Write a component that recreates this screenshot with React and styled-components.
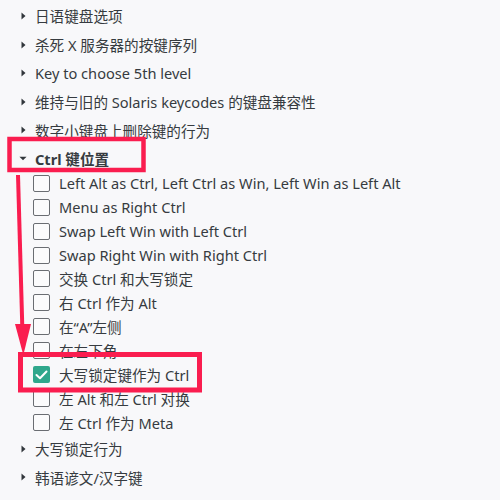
import React from "react";
import styled, { createGlobalStyle } from "styled-components";

const Global = createGlobalStyle`
  html, body { margin: 0; padding: 0; background: #f8f8fa; }
  body {
    width: 500px; height: 500px; overflow: hidden;
    font-family: "Noto Sans", "Noto Sans CJK SC", sans-serif;
    color: #363b40;
  }
`;

const Page = styled.div`
  position: relative;
  width: 500px;
  height: 500px;
  padding-top: 1.7px;
  box-sizing: border-box;
`;

const Tree = styled.ul`
  list-style: none;
  margin: 0;
  padding: 0;
`;

const Header = styled.li`
  height: 28.6px;
  display: flex;
  align-items: center;
  padding-left: 19px;
  font-size: 14.6px;
  font-weight: ${(p) => (p.$bold ? 700 : 400)};
`;

const Twisty = styled.span`
  width: 8px;
  height: 8px;
  margin-right: 8px;
  display: flex;
  align-items: center;
  justify-content: center;
  flex: none;
`;

const Children = styled.ul`
  list-style: none;
  margin: -1.8px 0 0 0;
  padding: 0;
`;

const Option = styled.li`
  height: 23.9px;
  display: flex;
  align-items: center;
  padding-left: 33px;
  font-size: 14.6px;
`;

const Box = styled.span`
  width: 17px;
  height: 17px;
  box-sizing: border-box;
  border-radius: 2px;
  border: ${(p) => (p.$checked ? "none" : "1px solid #6a6d72")};
  background: ${(p) => (p.$checked ? "#2fa78c" : "#fbfbfc")};
  margin-right: 9px;
  flex: none;
  display: flex;
  align-items: center;
  justify-content: center;
`;

const Overlay = styled.svg`
  position: absolute;
  left: 0;
  top: 0;
  pointer-events: none;
`;

const Collapsed = () => (
  <svg width="5" height="8" viewBox="0 0 5 8">
    <path d="M0.5 0.5 L4.5 4 L0.5 7.5 Z" fill="#31363b" />
  </svg>
);

const Expanded = () => (
  <svg width="9" height="5" viewBox="0 0 9 5">
    <path d="M0.5 0.5 L8.5 0.5 L4.5 4.5 Z" fill="#31363b" />
  </svg>
);

const Check = () => (
  <svg width="13" height="10" viewBox="0 0 13 10">
    <path d="M1.5 5 L5 8.3 L11.5 1.5" fill="none" stroke="#fff" strokeWidth="2" strokeLinecap="round" strokeLinejoin="round" />
  </svg>
);

const topItems = [
  "日语键盘选项",
  "杀死 X 服务器的按键序列",
  "Key to choose 5th level",
  "维持与旧的 Solaris keycodes 的键盘兼容性",
  "数字小键盘上删除键的行为",
];

const options = [
  "Left Alt as Ctrl, Left Ctrl as Win, Left Win as Left Alt",
  "Menu as Right Ctrl",
  "Swap Left Win with Left Ctrl",
  "Swap Right Win with Right Ctrl",
  "交换 Ctrl 和大写锁定",
  "右 Ctrl 作为 Alt",
  "在“A”左侧",
  "在左下角",
  "大写锁定键作为 Ctrl",
  "左 Alt 和左 Ctrl 对换",
  "左 Ctrl 作为 Meta",
];

const bottomItems = ["大写锁定行为", "韩语谚文/汉字键"];

export default function App() {
  const red = "#fa1d4f";
  return (
    <>
      <Global />
      <Page>
        <Tree>
          {topItems.map((t) => (
            <Header key={t}>
              <Twisty><Collapsed /></Twisty>
              {t}
            </Header>
          ))}
          <Header $bold>
            <Twisty><Expanded /></Twisty>
            Ctrl 键位置
          </Header>
          <Children>
            {options.map((o, i) => (
              <Option key={o}>
                <Box $checked={i === 8}>{i === 8 && <Check />}</Box>
                {o}
              </Option>
            ))}
          </Children>
          {bottomItems.map((t) => (
            <Header key={t}>
              <Twisty><Collapsed /></Twisty>
              {t}
            </Header>
          ))}
        </Tree>
        <Overlay width="500" height="500" viewBox="0 0 500 500">
          <rect x="9.5" y="139" width="134" height="31" fill="none" stroke={red} strokeWidth="4.5" />
          <rect x="20.5" y="354.5" width="179" height="35.5" fill="none" stroke={red} strokeWidth="5" />
          <path d="M18 175 L22.3 327" stroke={red} strokeWidth="4" fill="none" />
          <path d="M15 324 L31 324 L23.3 355 Z" fill={red} />
        </Overlay>
      </Page>
    </>
  );
}
